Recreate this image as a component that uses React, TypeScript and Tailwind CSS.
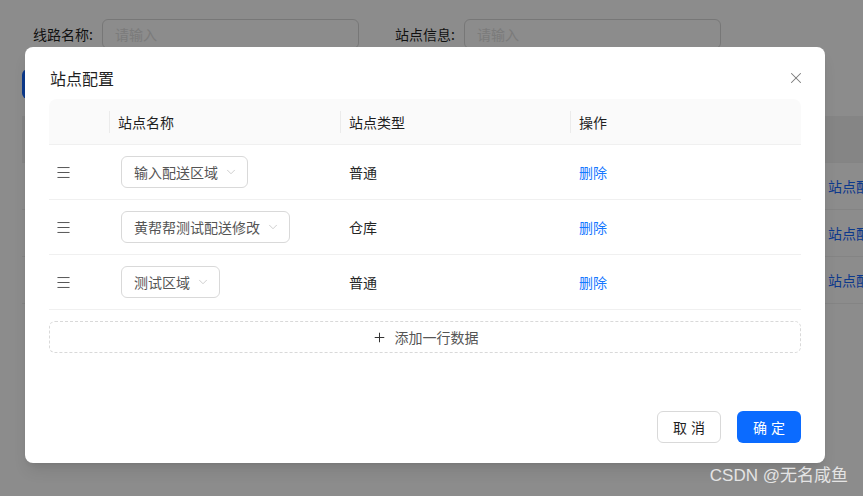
import { ChevronDown, Menu, Plus, X } from "lucide-react";

const rows = [
  { name: "输入配送区域", type: "普通" },
  { name: "黄帮帮测试配送修改", type: "仓库" },
  { name: "测试区域", type: "普通" },
];

function BackgroundPage() {
  return (
    <div className="h-full w-full bg-white">
      {/* Search form */}
      <div className="flex items-center pl-[33px] pt-[19px] text-sm text-[#1f1f1f]">
        <span className="w-[69px]">线路名称:</span>
        <div className="flex h-[30px] w-[257px] items-center rounded-md border border-[#d9d9d9] px-3 text-[#e0e0e0]">
          请输入
        </div>
        <span className="ml-[36px] w-[69px]">站点信息:</span>
        <div className="flex h-[30px] w-[257px] items-center rounded-md border border-[#d9d9d9] px-3 text-[#e0e0e0]">
          请输入
        </div>
      </div>
      <div className="ml-[22px] mt-[20px] h-[30px] w-[80px] rounded-md bg-[#1668ff]" />

      {/* Table behind */}
      <div className="mt-[17px] ml-[22px]">
        <div className="h-[47px] border-b border-[#f0f0f0] bg-[#f2f2f2]" />
        {[0, 1, 2].map((i) => (
          <div
            key={i}
            className="flex h-[47px] items-center whitespace-nowrap border-b border-[#f0f0f0] pl-[806px] text-sm text-[#1668ff]"
          >
            站点配置
          </div>
        ))}
      </div>
    </div>
  );
}

export default function App() {
  return (
    <div
      className="relative h-[496px] w-[863px] overflow-hidden"
      style={{ fontFamily: '"Noto Sans CJK SC", "Noto Sans", sans-serif' }}
    >
      <BackgroundPage />

      {/* Mask */}
      <div className="absolute inset-0 bg-black/45" />

      {/* Modal */}
      <div className="absolute left-[25px] top-[47px] flex h-[416px] w-[800px] flex-col rounded-lg bg-white px-6 pb-5 pt-5 shadow-lg">
        <div className="flex h-[22px] items-center justify-between">
          <h2 className="pl-px text-base font-normal leading-[22px] text-[#1f1f1f]">站点配置</h2>
          <X className="mr-[-4px] h-[18px] w-[18px] text-[#7a7a7a]" strokeWidth={1.4} />
        </div>

        {/* Table */}
        <div className="mt-[10px] text-sm">
          <div className="grid h-[46px] grid-cols-[60px_231px_230px_1fr] items-center rounded-t-lg border-b border-[#f0f0f0] bg-[#fafafa] font-normal text-[#1f1f1f]">
            <div />
            <div className="flex items-center">
              <span className="h-[22px] w-px bg-[#ebebeb]" />
              <span className="pl-[8px]">站点名称</span>
            </div>
            <div className="flex items-center">
              <span className="h-[22px] w-px bg-[#ebebeb]" />
              <span className="pl-[8px]">站点类型</span>
            </div>
            <div className="flex items-center">
              <span className="h-[22px] w-px bg-[#ebebeb]" />
              <span className="pl-[8px]">操作</span>
            </div>
          </div>

          {rows.map((r) => (
            <div
              key={r.name}
              className="grid h-[55px] grid-cols-[60px_231px_230px_1fr] items-center border-b border-[#f0f0f0] text-[#262626]"
            >
              <div className="pl-[6px]">
                <Menu className="h-[17px] w-[17px] text-[#555]" strokeWidth={1.4} />
              </div>
              <div className="pl-[12px]">
                <div className="inline-flex h-[32px] items-center gap-[6px] rounded-md border border-[#d9d9d9] pl-[12px] pr-[9px] text-[#555]">
                  <span>{r.name}</span>
                  <ChevronDown className="h-[14px] w-[14px] text-[#c4c4c4]" strokeWidth={1.4} />
                </div>
              </div>
              <div className="pl-[9px]">{r.type}</div>
              <div className="pl-[9px] text-[#1677ff]">删除</div>
            </div>
          ))}
        </div>

        <div className="mt-[11px] flex h-[32px] items-center justify-center gap-2 rounded-md border border-dashed border-[#d9d9d9] text-sm text-[#555]">
          <Plus className="h-[15px] w-[15px] text-[#333]" strokeWidth={1.6} />
          <span>添加一行数据</span>
        </div>

        <div className="mt-auto flex justify-end gap-4">
          <button className="h-[32px] w-[64px] rounded-md border border-[#d9d9d9] bg-white text-sm tracking-[4px] text-[#1f1f1f]">
            <span className="pl-[4px]">取消</span>
          </button>
          <button className="h-[32px] w-[64px] rounded-md bg-[#0b6bff] text-sm tracking-[4px] text-white">
            <span className="pl-[4px]">确定</span>
          </button>
        </div>
      </div>

      {/* Watermark */}
      <div
        className="absolute bottom-[8px] right-[15px] text-[17px] text-[#e4e4e4]"
        style={{ fontFamily: '"Liberation Sans", "Noto Sans CJK SC", sans-serif' }}
      >
        CSDN @无名咸鱼
      </div>
    </div>
  );
}
